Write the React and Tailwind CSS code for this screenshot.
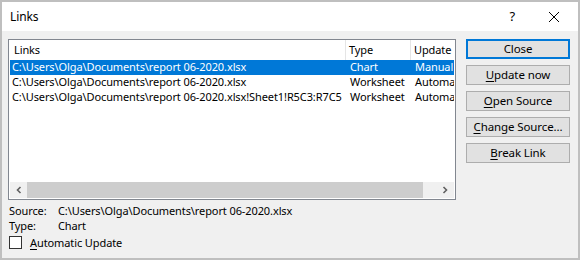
import React from "react";

const font = { fontFamily: '"Segoe UI", "Noto Sans", sans-serif' };

const rows = [
  ["C:\\Users\\Olga\\Documents\\report 06-2020.xlsx", "Chart", "Manual"],
  ["C:\\Users\\Olga\\Documents\\report 06-2020.xlsx", "Worksheet", "Automatic"],
  ["C:\\Users\\Olga\\Documents\\report 06-2020.xlsx!Sheet1!R5C3:R7C5", "Worksheet", "Automatic"],
];

const Btn = ({ children, primary }) => (
  <button
    className={
      primary
        ? "h-[20px] w-[104px] bg-[#e1e1e1] border-2 border-[#0078d7] text-[11.5px] text-black leading-none"
        : "h-[20px] w-[104px] bg-[#e1e1e1] border border-[#adadad] text-[11.5px] text-black leading-none"
    }
  >
    {children}
  </button>
);

const U = ({ children }) => <span className="underline underline-offset-2">{children}</span>;

export default function App() {
  return (
    <div className="w-[580px] h-[260px] bg-[#bfbfbf] p-[2px] overflow-hidden tracking-[-0.1px]" style={font}>
      <div className="w-full h-full bg-[#f0f0f0] flex flex-col">
        {/* title bar */}
        <div className="h-[29px] bg-white flex items-center shrink-0">
          <span className="ml-[8px] text-[12px] text-black">Links</span>
          <span className="ml-auto mr-[33px] text-[13px] text-black">?</span>
          <svg className="mr-[18px]" width="12" height="12" viewBox="0 0 12 12">
            <path d="M1 1L11 11M11 1L1 11" stroke="#000" strokeWidth="1" fill="none" />
          </svg>
        </div>

        <div className="flex pt-[8px] pl-[6px]">
          {/* list */}
          <div className="w-[448px] h-[161px] border border-[#828790] bg-white flex flex-col overflow-hidden text-[11px] text-black">
            <div className="h-[20px] flex items-center shrink-0 whitespace-nowrap">
              <div className="w-[337px] pl-[5px] border-r border-[#e5e5e5] h-full flex items-center">Links</div>
              <div className="w-[65px] pl-[3px] border-r border-[#e5e5e5] h-full flex items-center">Type</div>
              <div className="flex-1 pl-[3px] h-full flex items-center overflow-hidden">Update</div>
            </div>
            {rows.map((r, i) => (
              <div
                key={i}
                className={
                  i === 0
                    ? "h-[15px] mx-[1px] flex items-center whitespace-nowrap bg-[#0078d7] text-white"
                    : "h-[15px] mx-[1px] flex items-center whitespace-nowrap"
                }
              >
                <div className="w-[337px] pl-[2px] overflow-hidden">{r[0]}</div>
                <div className="w-[65px] pl-[3px]">{r[1]}</div>
                <div className="flex-1 pl-[3px] overflow-hidden">{r[2]}</div>
              </div>
            ))}
            <div className="flex-1" />
            {/* horizontal scrollbar */}
            <div className="h-[16px] mb-[1px] mx-[1px] flex bg-[#f0f0f0] shrink-0">
              <div className="w-[17px] flex items-center justify-center">
                <svg width="8" height="8" viewBox="0 0 8 8">
                  <path d="M5.5 1L2.5 4L5.5 7" stroke="#606060" strokeWidth="1.6" fill="none" />
                </svg>
              </div>
              <div className="w-[396px] bg-[#cdcdcd]" />
              <div className="flex-1 flex items-center justify-end pr-[5px]">
                <svg width="8" height="8" viewBox="0 0 8 8">
                  <path d="M2.5 1L5.5 4L2.5 7" stroke="#606060" strokeWidth="1.6" fill="none" />
                </svg>
              </div>
            </div>
          </div>

          {/* buttons */}
          <div className="ml-[10px] flex flex-col gap-[6px]">
            <Btn primary>Close</Btn>
            <Btn><U>U</U>pdate now</Btn>
            <Btn><U>O</U>pen Source</Btn>
            <Btn><U>C</U>hange Source...</Btn>
            <Btn><U>B</U>reak Link</Btn>
          </div>
        </div>

        {/* details */}
        <div className="pl-[7px] pt-[3px] text-[11px] text-black leading-[15px]">
          <div className="flex h-[15px] items-center">
            <span className="w-[49px]">Source:</span>
            <span>C:\Users\Olga\Documents\report 06-2020.xlsx</span>
          </div>
          <div className="flex h-[15px] items-center">
            <span className="w-[49px]">Type:</span>
            <span>Chart</span>
          </div>
          <div className="flex items-center h-[17px] mt-[1px]">
            <span className="w-[13px] h-[13px] border border-[#333] bg-white" />
            <span className="ml-[8px]"><U>A</U>utomatic Update</span>
          </div>
        </div>
      </div>
    </div>
  );
}
